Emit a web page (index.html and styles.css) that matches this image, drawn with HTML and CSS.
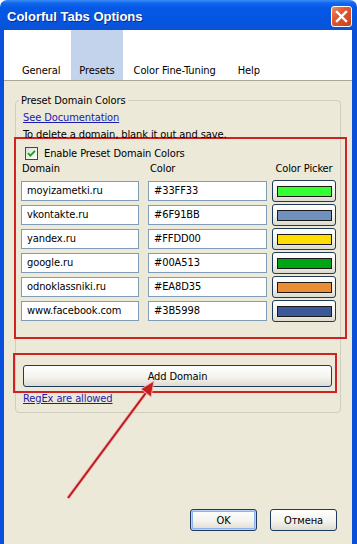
FILE: index.html
```html
<!DOCTYPE html>
<html>
<head>
<meta charset="utf-8">
<link rel="stylesheet" href="styles.css">
</head>
<body>
<div class="window">
  <div class="titlebar">
    <span class="title">Colorful Tabs Options</span>
    <span class="close">
      <svg width="13" height="13" viewBox="0 0 13 13"><path d="M2 2 L11 11 M11 2 L2 11" stroke="#fff" stroke-width="2.4" stroke-linecap="square"/></svg>
    </span>
  </div>
  <div class="frame">
    <div class="tabs">
      <div class="tab">General</div>
      <div class="tab active">Presets</div>
      <div class="tab">Color Fine-Tuning</div>
      <div class="tab help">Help</div>
    </div>
    <div class="panel">
      <fieldset class="group">
        <legend>Preset Domain Colors</legend>
        <div class="line"><a class="link">See Documentation</a></div>
        <div class="line">To delete a domain, blank it out and save.</div>
        <div class="redbox main">
          <label class="check"><span class="box"><svg width="9" height="9" viewBox="0 0 9 9"><path d="M1 4.2 L3.3 6.6 L8 1.8" fill="none" stroke="#21a121" stroke-width="1.9"/></svg></span>Enable Preset Domain Colors</label>
          <div class="grid">
            <div class="hd">Domain</div><div class="hd c2">Color</div><div class="hd c3">Color Picker</div>
            <div class="field">moyizametki.ru</div><div class="field w2">#33FF33</div><div class="picker"><span class="sw" style="background:#33FF33"></span></div>
            <div class="field">vkontakte.ru</div><div class="field w2">#6F91BB</div><div class="picker"><span class="sw" style="background:#6F91BB"></span></div>
            <div class="field">yandex.ru</div><div class="field w2">#FFDD00</div><div class="picker"><span class="sw" style="background:#FFDD00"></span></div>
            <div class="field">google.ru</div><div class="field w2">#00A513</div><div class="picker"><span class="sw" style="background:#00A513"></span></div>
            <div class="field">odnoklassniki.ru</div><div class="field w2">#EA8D35</div><div class="picker"><span class="sw" style="background:#EA8D35"></span></div>
            <div class="field">www.facebook.com</div><div class="field w2">#3B5998</div><div class="picker"><span class="sw" style="background:#3B5998"></span></div>
          </div>
        </div>
        <div class="redbox add">
          <div class="btn wide">Add Domain</div>
        </div>
        <div class="line regex"><a class="link">RegEx are allowed</a></div>
      </fieldset>
      <div class="footer">
        <div class="btn dlg default">OK</div>
        <div class="btn dlg">Отмена</div>
      </div>
      <svg class="arrow" width="357" height="544" viewBox="0 0 357 544">
        <line x1="68" y1="498" x2="148" y2="390" stroke="#f4b0b0" stroke-width="3.5"/>
        <line x1="68" y1="498" x2="148" y2="390" stroke="#b81c1c" stroke-width="2"/>
        <polygon points="154,381 141,389 151,397" fill="#c41e1e" stroke="#f4b0b0" stroke-width="1"/>
      </svg>
    </div>
  </div>
</div>
</body>
</html>
```
FILE: styles.css
```css
* { box-sizing: border-box; }
body {
  margin: 0;
  background: #ffffff;
  font-family: "DejaVu Sans Condensed", "DejaVu Sans", sans-serif;
  font-stretch: condensed;
  font-size: 11px;
  letter-spacing: -0.1px;
  color: #000;
}
.window {
  width: 357px;
  height: 544px;
  display: flex;
  flex-direction: column;
  position: relative;
}
.titlebar {
  height: 30px;
  border-radius: 7px 7px 0 0;
  background: linear-gradient(#3b8cf7 0, #1168ee 3px, #0558e6 8px, #0456e2 60%, #0a52d6 100%);
  display: flex;
  align-items: center;
  justify-content: space-between;
  padding: 0 5px 0 7px;
}
.title {
  color: #fff;
  font-family: "Liberation Sans", Arial, sans-serif;
  font-stretch: normal;
  letter-spacing: 0;
  font-weight: bold;
  font-size: 13px;
  text-shadow: 1px 1px 0 #0b2a8a;
  margin-top: 2px;
}
.close {
  width: 21px;
  height: 21px;
  border: 1px solid #fff;
  border-radius: 3px;
  background: linear-gradient(135deg, #f08a66 0, #e0562e 40%, #c8401c 100%);
  display: flex;
  align-items: center;
  justify-content: center;
  margin-top: 3px;
}
.frame {
  flex: 1;
  display: flex;
  flex-direction: column;
  border-left: 4px solid #0b50dc;
  border-right: 5px solid #0a4fd8;
  background: #ece9d8;
}
.tabs {
  height: 51px;
  background: #fff;
  border-bottom: 1px solid #a8a69a;
  display: flex;
  align-items: stretch;
  padding-left: 10px;
  gap: 3px;
}
.tab {
  display: flex;
  align-items: flex-end;
  padding: 0 8px 3px 8px;
  line-height: 13px;
}
.tab.active { background: #c4d3ec; }
.tab.help { margin-left: 3px; }
.panel {
  flex: 1;
  display: flex;
  flex-direction: column;
}
.group {
  margin: 13px 11px 0 11px;
  border: 1px solid #d0cebf;
  border-radius: 4px;
  padding: 0 6px 6px 6px;
  min-width: 0;
}
.group legend {
  padding: 0 2px;
  margin-left: -3px;
  line-height: 13px;
}
.line { line-height: 17px; margin-left: 1px; white-space: nowrap; }
.line:first-of-type { margin-top: 2px; }
.link { color: #1b1bb0; text-decoration: underline; }
.redbox { border: 2px solid #cf2222; }
.main {
  margin: -6px -13px 0 -8px;
  padding: 6px 9px 15px 5px;
}
.check {
  display: flex;
  align-items: center;
  height: 16px;
  margin-left: 4px;
  gap: 6px;
}
.box {
  width: 13px;
  height: 13px;
  border: 1px solid #1c5180;
  background: linear-gradient(135deg, #dcdcd6, #fff);
  display: flex;
  align-items: center;
  justify-content: center;
}
.grid {
  display: grid;
  grid-template-columns: 127px 124px 64px;
  row-gap: 2px;
  align-items: center;
}
.hd { height: 16px; line-height: 16px; padding-left: 1px; margin-bottom: 1px; }
.hd.c2 { padding-left: 2px; }
.hd.c3 { text-align: center; padding-left: 0; }
.field {
  width: 118px;
  height: 20px;
  border: 1px solid #7f9db9;
  background: #fff;
  padding-left: 5px;
  line-height: 18px;
  font-size: 11px;
  white-space: nowrap;
  overflow: hidden;
}
.field.w2 { width: 119px; }
.picker {
  height: 22px;
  border: 1px solid #1e3a5c;
  border-radius: 3px;
  background: linear-gradient(#ffffff, #f2f1ea 60%, #dcd9cc);
  display: flex;
  align-items: center;
  justify-content: center;
}
.sw {
  width: 55px;
  height: 11px;
  border: 1px solid #1a1a1a;
}
.add {
  margin: 14px -3px 0 -9px;
  padding: 10px 3px 4px 8px;
}
.btn {
  height: 22px;
  border: 1px solid #1e3a5c;
  border-radius: 3px;
  background: linear-gradient(#ffffff, #f4f3ee 55%, #dedbd0);
  display: flex;
  align-items: center;
  justify-content: center;
  font-size: 11px;
}
.regex { margin-top: -1px; line-height: 14px; }
.footer {
  margin-top: auto;
  margin-bottom: 13px;
  margin-right: 15px;
  display: flex;
  justify-content: flex-end;
  gap: 13px;
}
.dlg { width: 67px; }
.default {
  box-shadow: inset 0 0 0 1px #b8d0f4, inset 0 0 0 2px #8fb3ea;
}
.arrow {
  position: absolute;
  left: 0;
  top: 0;
  pointer-events: none;
}
```
